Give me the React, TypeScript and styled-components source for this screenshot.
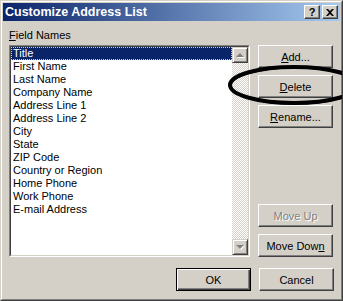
import styled, { createGlobalStyle } from "styled-components";

const GlobalStyle = createGlobalStyle`
  html, body {
    margin: 0;
    padding: 0;
    background: #d4d0c8;
  }
  body {
    font-family: "Liberation Sans", Arial, sans-serif;
    font-size: 11px;
  }
`;

const Window = styled.div`
  position: relative;
  width: 343px;
  height: 301px;
  box-sizing: border-box;
  border: 1px solid;
  border-color: #d4d0c8 #404040 #404040 #d4d0c8;
  background: #d4d0c8;
  overflow: hidden;
`;

const Frame = styled.div`
  height: 100%;
  box-sizing: border-box;
  border: 1px solid;
  border-color: #ffffff #808080 #808080 #ffffff;
  padding: 1px;
  display: flex;
  flex-direction: column;
`;

const TitleBar = styled.div`
  height: 18px;
  flex: none;
  display: flex;
  align-items: center;
  padding: 0 2px 0 2px;
  background: linear-gradient(to right, #0a246a, #a6caf0);
`;

const TitleText = styled.span`
  flex: 1;
  color: #ffffff;
  font-weight: bold;
  font-size: 12.5px;
`;

const CaptionButton = styled.div`
  width: 16px;
  height: 14px;
  box-sizing: border-box;
  background: #d4d0c8;
  border: 1px solid;
  border-color: #ffffff #404040 #404040 #ffffff;
  box-shadow: inset -1px -1px 0 #808080;
  display: flex;
  align-items: center;
  justify-content: center;
  font-weight: bold;
  font-size: 11px;
  color: #000;
  & + & {
    margin-left: 2px;
  }
`;

const Client = styled.div`
  flex: 1;
  padding: 0 6px 0 6px;
  display: flex;
  flex-direction: column;
`;

const Body = styled.div`
  display: grid;
  grid-template-columns: 241px 75px;
  grid-template-rows: 24px 212px;
  column-gap: 8px;
`;

const Label = styled.div`
  grid-column: 1 / 3;
  padding-top: 8px;
  line-height: 13px;
  color: #000;
`;

const Key = styled.span`
  text-decoration: underline;
  text-underline-offset: 1px;
`;

const ListBox = styled.div`
  box-sizing: border-box;
  border: 1px solid;
  border-color: #808080 #ffffff #ffffff #808080;
  display: flex;
`;

const ListInner = styled.div`
  flex: 1;
  display: flex;
  border: 1px solid;
  border-color: #404040 #d4d0c8 #d4d0c8 #404040;
  background: #ffffff;
`;

const Items = styled.div`
  flex: 1;
`;

const Item = styled.div<{ $selected?: boolean }>`
  height: 13px;
  line-height: 13px;
  padding-left: 2px;
  white-space: nowrap;
  color: ${(p) => (p.$selected ? "#ffffff" : "#000000")};
  background: ${(p) => (p.$selected ? "#0a246a" : "transparent")};
  outline: ${(p) => (p.$selected ? "1px dotted #d4d0c8" : "none")};
  outline-offset: -1px;
`;

const ScrollBar = styled.div`
  width: 16px;
  display: flex;
  flex-direction: column;
`;

const Track = styled.div`
  flex: 1;
  background: repeating-conic-gradient(#ffffff 0 25%, #d4d0c8 0 50%) 0 0 / 2px 2px;
`;

const ArrowButton = styled.div`
  width: 16px;
  height: 16px;
  box-sizing: border-box;
  background: #d4d0c8;
  border: 1px solid;
  border-color: #d4d0c8 #404040 #404040 #d4d0c8;
  box-shadow: inset 1px 1px 0 #ffffff, inset -1px -1px 0 #808080;
  display: flex;
  align-items: center;
  justify-content: center;
`;

const Side = styled.div`
  display: flex;
  flex-direction: column;
  gap: 7px;
`;

const Spacer = styled.div`
  flex: 1;
`;

const Button = styled.div<{ $default?: boolean; $disabled?: boolean }>`
  width: 75px;
  height: 23px;
  box-sizing: border-box;
  background: #d4d0c8;
  border: 1px solid;
  border-color: ${(p) =>
    p.$default ? "#000000" : "#ffffff #404040 #404040 #ffffff"};
  box-shadow: ${(p) =>
    p.$default
      ? "inset 1px 1px 0 #ffffff, inset -1px -1px 0 #404040, inset -2px -2px 0 #808080"
      : "inset -1px -1px 0 #808080"};
  display: flex;
  align-items: center;
  justify-content: center;
  color: ${(p) => (p.$disabled ? "#808080" : "#000000")};
  text-shadow: ${(p) => (p.$disabled ? "1px 1px 0 #ffffff" : "none")};
  white-space: nowrap;
`;

const Footer = styled.div`
  display: flex;
  justify-content: flex-end;
  gap: 8px;
  margin-top: 11px;
`;

const Annotation = styled.svg`
  position: absolute;
  left: 0;
  top: 0;
  pointer-events: none;
`;

const items = [
  "Title",
  "First Name",
  "Last Name",
  "Company Name",
  "Address Line 1",
  "Address Line 2",
  "City",
  "State",
  "ZIP Code",
  "Country or Region",
  "Home Phone",
  "Work Phone",
  "E-mail Address",
];

function Arrow({ up }: { up?: boolean }) {
  const d = up ? "M4 0 L8 4 L0 4 Z" : "M0 0 L8 0 L4 4 Z";
  return (
    <svg width="9" height="5" viewBox="0 0 9 5">
      <path d={d} fill="#ffffff" transform="translate(1 1)" />
      <path d={d} fill="#808080" />
    </svg>
  );
}

export default function App() {
  return (
    <>
      <GlobalStyle />
      <Window>
        <Frame>
          <TitleBar>
            <TitleText>Customize Address List</TitleText>
            <CaptionButton>?</CaptionButton>
            <CaptionButton>
              <svg width="8" height="7" viewBox="0 0 8 7">
                <path
                  d="M0 0 L2 0 L4 2 L6 0 L8 0 L5 3.5 L8 7 L6 7 L4 5 L2 7 L0 7 L3 3.5 Z"
                  fill="#000"
                />
              </svg>
            </CaptionButton>
          </TitleBar>
          <Client>
            <Body>
              <Label>
                <Key>F</Key>ield Names
              </Label>
              <ListBox>
                <ListInner>
                  <Items>
                    {items.map((it, i) => (
                      <Item key={it} $selected={i === 0}>
                        {it}
                      </Item>
                    ))}
                  </Items>
                  <ScrollBar>
                    <ArrowButton>
                      <Arrow up />
                    </ArrowButton>
                    <Track />
                    <ArrowButton>
                      <Arrow />
                    </ArrowButton>
                  </ScrollBar>
                </ListInner>
              </ListBox>
              <Side>
                <Button>
                  <Key>A</Key>dd...
                </Button>
                <Button>
                  <Key>D</Key>elete
                </Button>
                <Button>
                  <Key>R</Key>ename...
                </Button>
                <Spacer />
                <Button $disabled>Move Up</Button>
                <Button>
                  Move Dow<Key>n</Key>
                </Button>
              </Side>
            </Body>
            <Footer>
              <Button $default>OK</Button>
              <Button>Cancel</Button>
            </Footer>
          </Client>
        </Frame>
        <Annotation width="343" height="301" viewBox="0 0 343 301">
          <ellipse
            cx="293"
            cy="84"
            rx="64"
            ry="18"
            fill="none"
            stroke="#000"
            strokeWidth="4"
          />
          <ellipse
            cx="294"
            cy="84.5"
            rx="64"
            ry="18"
            fill="none"
            stroke="#000"
            strokeWidth="2"
          />
        </Annotation>
      </Window>
    </>
  );
}
